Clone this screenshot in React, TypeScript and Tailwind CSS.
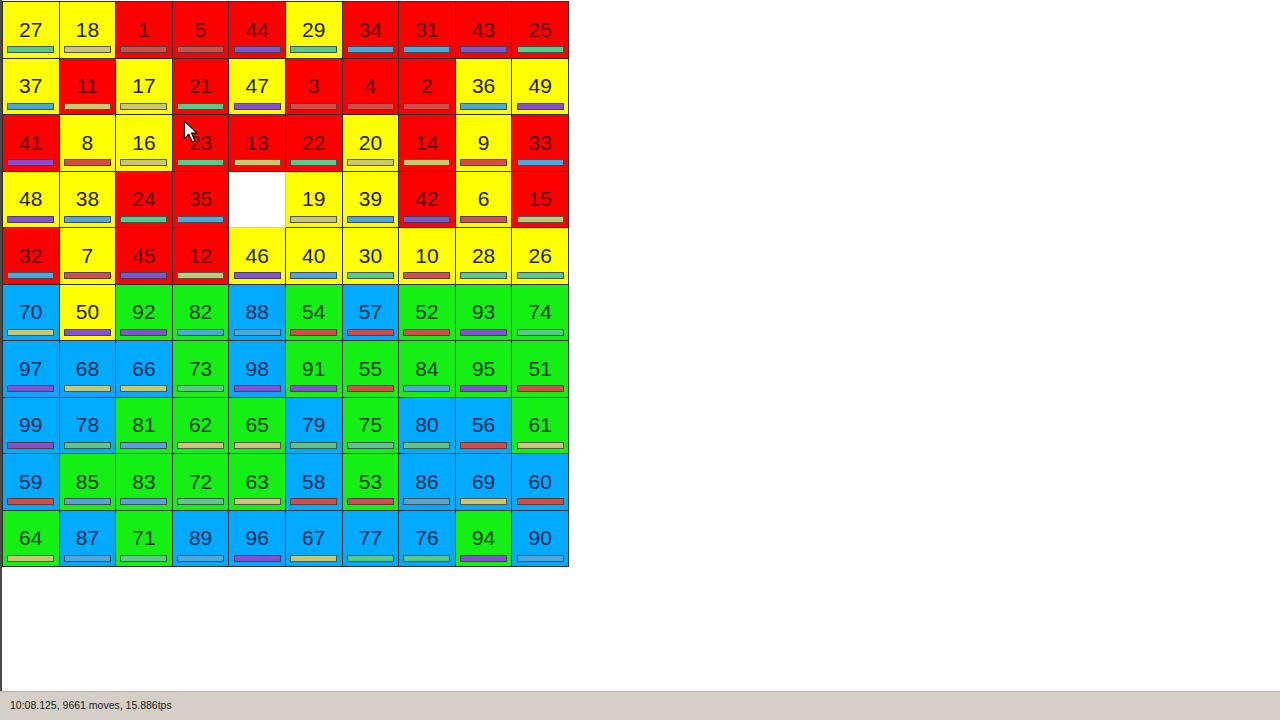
import React from 'react'

const board = [
  [27, 18, 1, 5, 44, 29, 34, 31, 43, 25],
  [37, 11, 17, 21, 47, 3, 4, 2, 36, 49],
  [41, 8, 16, 23, 13, 22, 20, 14, 9, 33],
  [48, 38, 24, 35, 0, 19, 39, 42, 6, 15],
  [32, 7, 45, 12, 46, 40, 30, 10, 28, 26],
  [70, 50, 92, 82, 88, 54, 57, 52, 93, 74],
  [97, 68, 66, 73, 98, 91, 55, 84, 95, 51],
  [99, 78, 81, 62, 65, 79, 75, 80, 56, 61],
  [59, 85, 83, 72, 63, 58, 53, 86, 69, 60],
  [64, 87, 71, 89, 96, 67, 77, 76, 94, 90],
]

// tile colour from the quadrant the number belongs to
function tileClass(n: number) {
  const col = (n - 1) % 10
  if (n <= 50) return col < 5 ? 'bg-[#ff0000] text-[#5a0000]' : 'bg-[#ffff00] text-[#1e1e00]'
  return col < 5 ? 'bg-[#14f014] text-[#0b3d0b]' : 'bg-[#00aaff] text-[#0a2c55]'
}

// bar colour from the target row
const barColors = ['bg-[#d24c4c]', 'bg-[#c8c874]', 'bg-[#58c98a]', 'bg-[#4fa6d8]', 'bg-[#8452cc]']

function Tile({ n }: { n: number }) {
  if (!n) return <div className="h-[56.5px] bg-white border-r border-b border-[#c8c8c8]" />
  const row = Math.floor((n - 1) / 10)
  return (
    <div className={`h-[56.5px] border-r border-b border-[#2d2d2d] flex flex-col items-center ${tileClass(n)}`}>
      <div className="h-[44px] flex items-center justify-center text-[21px] leading-none pt-[10px]">{n}</div>
      <div className={`w-[47px] h-[7px] border border-[#3a3a3a]/80 ${barColors[row % 5]}`} />
    </div>
  )
}

export default function App() {
  return (
    <div className="w-[1280px] h-[720px] flex flex-col bg-white overflow-hidden" style={{ fontFamily: '"Liberation Sans", Arial, sans-serif' }}>
      <div className="relative flex-1 border-l-2 border-[#4a4a4a] pt-px">
        <div className="grid grid-cols-10 w-[567px] border-l border-t border-[#2d2d2d]">
          {board.flat().map((n, i) => (
            <Tile key={i} n={n} />
          ))}
        </div>
        <svg className="absolute left-[181px] top-[120px]" width="16" height="24" viewBox="0 0 14 22">
          <path d="M1 1 L1 17 L5 13 L8 20 L10.5 19 L7.5 12 L12.5 12 Z" fill="#fff" stroke="#000" strokeWidth="1" strokeLinejoin="round" />
        </svg>
      </div>
      <div className="h-[29px] bg-[#d4d0c8] border-t border-[#b8b4ac] flex items-center pl-[10px] text-[10.5px] text-[#202020]">
        10:08.125, 9661 moves, 15.886tps
      </div>
    </div>
  )
}
